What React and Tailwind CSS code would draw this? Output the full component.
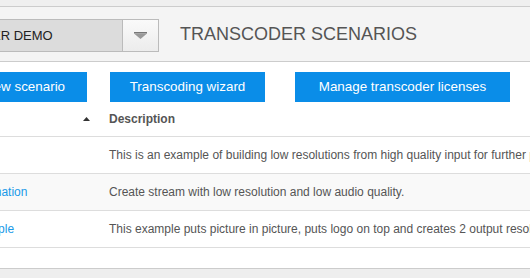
import React from 'react';

const rows = [
  {
    name: 'Basic',
    desc: 'This is an example of building low resolutions from high quality input for further processing.',
  },
  {
    name: 'Low resolutions combination',
    desc: 'Create stream with low resolution and low audio quality.',
  },
  {
    name: 'Picture in picture example',
    desc: 'This example puts picture in picture, puts logo on top and creates 2 output resolutions.',
  },
];

const App = () => {
  return (
    <div className="w-[530px] h-[278px] overflow-hidden bg-white font-['Liberation_Sans',Arial,sans-serif]">
      <div className="h-[6px] bg-[#efefef]" />

      {/* header bar */}
      <div className="h-[56px] bg-[#f4f4f4] border-y border-[#cccccc] flex items-center">
        <div className="-ml-[37px] mt-[3px] flex h-[33px] border border-[#bbbbbb]">
          <div className="w-[158px] bg-[#dcdcdc] pl-[10px] flex items-center text-[13px] text-[#222] whitespace-nowrap">
            USER DEMO
          </div>
          <div className="w-[36px] border-l border-[#bbbbbb] bg-gradient-to-b from-[#fafafa] to-[#ececec] flex items-center justify-center">
            <svg width="13" height="7" viewBox="0 0 13 7">
              <rect x="0" y="0" width="13" height="1.5" fill="#777" />
              <path d="M0 1.5 L13 1.5 L6.5 7 Z" fill="#999" />
            </svg>
          </div>
        </div>
        <h1 className="ml-[21px] text-[18px] text-[#555] whitespace-nowrap">TRANSCODER SCENARIOS</h1>
      </div>

      {/* action buttons */}
      <div className="-ml-[38px] mt-[10px] flex text-[13.4px] text-white whitespace-nowrap">
        <button className="w-[125px] h-[30px] bg-[#0a8de8]">New scenario</button>
        <button className="ml-[23px] w-[155px] h-[30px] bg-[#0a8de8]">Transcoding wizard</button>
        <button className="ml-[30px] w-[215px] h-[30px] bg-[#0a8de8]">Manage transcoder licenses</button>
      </div>

      {/* table */}
      <div className="-ml-[124px] w-[800px]">
        <div className="flex h-[35px] border-b border-[#dddddd] text-[12px] font-bold text-[#555]">
          <div className="w-[224px] flex items-center justify-between pr-[10px]">
            <span>Name</span>
            <svg width="7" height="4" viewBox="0 0 7 4">
              <path d="M0 4 L3.5 0 L7 4 Z" fill="#333" />
            </svg>
          </div>
          <div className="flex items-center pl-[9px]">Description</div>
        </div>
        {rows.map((r, i) => (
          <div
            key={r.name}
            className={`flex h-[37px] border-b border-[#dddddd] text-[12px] whitespace-nowrap ${i === 1 ? 'bg-[#f9f9f9]' : 'bg-white'}`}
          >
            <div className="w-[224px] flex items-center text-[#1a9ae8]">{r.name}</div>
            <div className="flex items-center pl-[9px] text-[#555]">{r.desc}</div>
          </div>
        ))}
      </div>

      <div className="h-[20px] bg-white" />
      <div className="h-[20px] border-t border-[#cccccc] bg-[#eeeeee]" />
    </div>
  );
};

export default App;
